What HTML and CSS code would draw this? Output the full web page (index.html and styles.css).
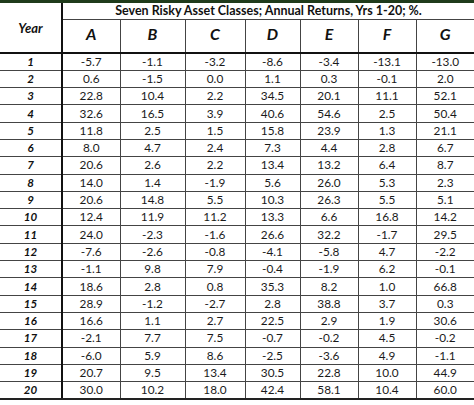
FILE: index.html
```html
<!DOCTYPE html>
<html>
<head>
<meta charset="utf-8">
<link rel="stylesheet" href="styles.css">
</head>
<body>
<div class="topbar"></div>
<table class="returns">
  <colgroup>
    <col class="c-year"><col class="c-a"><col class="c-b"><col class="c-c"><col class="c-d"><col class="c-e"><col class="c-f"><col class="c-g">
  </colgroup>
  <thead>
    <tr class="title-row">
      <th class="year-head" rowspan="2">Year</th>
      <th class="title" colspan="7">Seven Risky Asset Classes; Annual Returns, Yrs 1-20; %.</th>
    </tr>
    <tr class="letter-row">
      <th>A</th><th>B</th><th>C</th><th>D</th><th>E</th><th>F</th><th>G</th>
    </tr>
  </thead>
  <tbody>
    <tr><th>1</th><td>-5.7</td><td>-1.1</td><td>-3.2</td><td>-8.6</td><td>-3.4</td><td>-13.1</td><td>-13.0</td></tr>
    <tr><th>2</th><td>0.6</td><td>-1.5</td><td>0.0</td><td>1.1</td><td>0.3</td><td>-0.1</td><td>2.0</td></tr>
    <tr><th>3</th><td>22.8</td><td>10.4</td><td>2.2</td><td>34.5</td><td>20.1</td><td>11.1</td><td>52.1</td></tr>
    <tr><th>4</th><td>32.6</td><td>16.5</td><td>3.9</td><td>40.6</td><td>54.6</td><td>2.5</td><td>50.4</td></tr>
    <tr><th>5</th><td>11.8</td><td>2.5</td><td>1.5</td><td>15.8</td><td>23.9</td><td>1.3</td><td>21.1</td></tr>
    <tr><th>6</th><td>8.0</td><td>4.7</td><td>2.4</td><td>7.3</td><td>4.4</td><td>2.8</td><td>6.7</td></tr>
    <tr><th>7</th><td>20.6</td><td>2.6</td><td>2.2</td><td>13.4</td><td>13.2</td><td>6.4</td><td>8.7</td></tr>
    <tr><th>8</th><td>14.0</td><td>1.4</td><td>-1.9</td><td>5.6</td><td>26.0</td><td>5.3</td><td>2.3</td></tr>
    <tr><th>9</th><td>20.6</td><td>14.8</td><td>5.5</td><td>10.3</td><td>26.3</td><td>5.5</td><td>5.1</td></tr>
    <tr><th>10</th><td>12.4</td><td>11.9</td><td>11.2</td><td>13.3</td><td>6.6</td><td>16.8</td><td>14.2</td></tr>
    <tr><th>11</th><td>24.0</td><td>-2.3</td><td>-1.6</td><td>26.6</td><td>32.2</td><td>-1.7</td><td>29.5</td></tr>
    <tr><th>12</th><td>-7.6</td><td>-2.6</td><td>-0.8</td><td>-4.1</td><td>-5.8</td><td>4.7</td><td>-2.2</td></tr>
    <tr><th>13</th><td>-1.1</td><td>9.8</td><td>7.9</td><td>-0.4</td><td>-1.9</td><td>6.2</td><td>-0.1</td></tr>
    <tr><th>14</th><td>18.6</td><td>2.8</td><td>0.8</td><td>35.3</td><td>8.2</td><td>1.0</td><td>66.8</td></tr>
    <tr><th>15</th><td>28.9</td><td>-1.2</td><td>-2.7</td><td>2.8</td><td>38.8</td><td>3.7</td><td>0.3</td></tr>
    <tr><th>16</th><td>16.6</td><td>1.1</td><td>2.7</td><td>22.5</td><td>2.9</td><td>1.9</td><td>30.6</td></tr>
    <tr><th>17</th><td>-2.1</td><td>7.7</td><td>7.5</td><td>-0.7</td><td>-0.2</td><td>4.5</td><td>-0.2</td></tr>
    <tr><th>18</th><td>-6.0</td><td>5.9</td><td>8.6</td><td>-2.5</td><td>-3.6</td><td>4.9</td><td>-1.1</td></tr>
    <tr><th>19</th><td>20.7</td><td>9.5</td><td>13.4</td><td>30.5</td><td>22.8</td><td>10.0</td><td>44.9</td></tr>
    <tr><th>20</th><td>30.0</td><td>10.2</td><td>18.0</td><td>42.4</td><td>58.1</td><td>10.4</td><td>60.0</td></tr>
  </tbody>
</table>
</body>
</html>
```
FILE: styles.css
```css
html, body {
  margin: 0;
  padding: 0;
  background: #ffffff;
}
body {
  width: 474px;
  height: 405px;
  overflow: hidden;
  font-family: Lato, "Open Sans", sans-serif;
  color: #1a1a1a;
}
.topbar {
  height: 3px;
  background: #1f3b1b;
}
.returns {
  width: 474px;
  border-collapse: collapse;
  table-layout: fixed;
}
.c-year { width: 62px; }
.c-a { width: 58px; }
.c-b { width: 65px; }
.c-c { width: 60px; }
.c-d { width: 55px; }
.c-e { width: 58px; }
.c-f { width: 58px; }
.c-g { width: 58px; }

.returns th, .returns td {
  padding: 0;
  text-align: center;
  vertical-align: middle;
  border: 1px solid #444;
  white-space: nowrap;
  overflow: hidden;
}
.returns tr > :first-child { border-left: none; }
.returns tr > :last-child { border-right: none; }
.title-row th { border-top: none; }

.title-row { height: 16px; }
.title {
  font-weight: 700;
  font-size: 12.5px;
  line-height: 15px;
  color: #111;
}
.year-head {
  font-weight: 700;
  font-style: italic;
  font-size: 13px;
  color: #111;
  padding-bottom: 4px;
  border-right: 2px solid #111 !important;
  border-bottom: 2px solid #111 !important;
}
.letter-row { height: 34px; }
.letter-row th {
  font-weight: 700;
  font-style: italic;
  font-size: 16px;
  line-height: 18px;
  color: #111;
  padding-bottom: 4px;
  border-bottom: 2px solid #111;
}
tbody tr { height: 17.3px; }
tbody td {
  font-size: 11.8px;
  line-height: 14px;
}
tbody th {
  font-weight: 700;
  font-style: italic;
  font-size: 11.5px;
  line-height: 14px;
  color: #111;
  border-right: 2px solid #111 !important;
}
tbody tr:last-child > * { border-bottom: 2px solid #222; }
```
